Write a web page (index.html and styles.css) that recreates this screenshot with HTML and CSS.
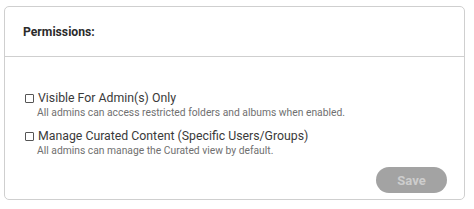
FILE: index.html
```html
<!DOCTYPE html>
<html lang="en">
<head>
    <meta charset="UTF-8">
    <title>Permissions</title>
    <link rel="stylesheet" href="styles.css">
</head>
<body>
    <div class="card">
        <div class="card-header">
            <h3>Permissions:</h3>
        </div>
        <div class="card-body">
            <div class="option">
                <label class="option-label">
                    <input type="checkbox" class="check">
                    Visible For Admin(s) Only
                </label>
                <div class="option-desc">All admins can access restricted folders and albums when enabled.</div>
            </div>
            <div class="option">
                <label class="option-label">
                    <input type="checkbox" class="check">
                    Manage Curated Content (Specific Users/Groups)
                </label>
                <div class="option-desc">All admins can manage the Curated view by default.</div>
            </div>
            <div class="actions">
                <button class="btn-save" disabled>Save</button>
            </div>
        </div>
    </div>
</body>
</html>
```

FILE: styles.css
```css
body {
    margin: 0;
    background-color: #fff;
    font-family: Roboto, "Liberation Sans", Arial, sans-serif;
    color: #333;
}

.card {
    margin: 6px 0 0 4px;
    width: 461px;
    height: 194px;
    box-sizing: border-box;
    border: 1px solid #cfcfcf;
    border-radius: 5px;
    display: flex;
    flex-direction: column;
}

.card-header {
    height: 49px;
    border-bottom: 1px solid #cfcfcf;
    display: flex;
    align-items: center;
    padding: 0 18px;
}

.card-header h3 {
    margin: 0;
    font-size: 12.2px;
    font-weight: bold;
    color: #2b2b2b;
}

.card-body {
    flex: 1;
    padding: 34px 17px 0 20px;
}

.option {
    margin-bottom: 9px;
}

.option-label {
    display: flex;
    align-items: center;
    font-size: 12.3px;
    line-height: 15px;
    color: #3a3a3a;
}

.check {
    appearance: none;
    -webkit-appearance: none;
    box-sizing: border-box;
    width: 9px;
    height: 9px;
    margin: 0 4px 0 0;
    border: 1px solid #555;
    border-radius: 1px;
    background: #fff;
}

.option-desc {
    font-size: 10.3px;
    line-height: 14px;
    color: #707070;
    padding-left: 12px;
}

.actions {
    display: flex;
    justify-content: flex-end;
    margin-top: 4px;
}

.btn-save {
    width: 71px;
    height: 26px;
    border: none;
    border-radius: 13px;
    background-color: #a3a3a3;
    color: #cdcdcd;
    font-family: Roboto, "Liberation Sans", Arial, sans-serif;
    font-size: 13px;
    font-weight: bold;
}
```
